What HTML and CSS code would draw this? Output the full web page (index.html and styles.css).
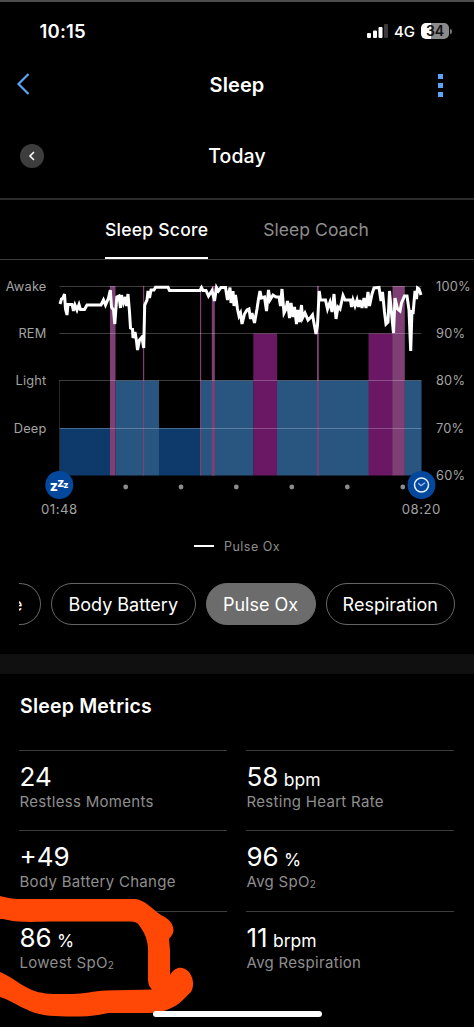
FILE: index.html
```
<!DOCTYPE html>
<html lang="en">
<head>
  <meta charset="UTF-8" />
  <meta name="viewport" content="width=device-width, initial-scale=1.0" />
  <title>Sleep</title>
  <link rel="stylesheet" href="styles.css">
</head>
<body>

<div class="status-bar">
  <span class="time">10:15</span>
  <div class="status-right">
    <svg class="signal" width="22" height="16" viewBox="0 0 22 16">
      <rect x="0" y="10" width="4" height="5" rx="1" fill="#fff"/>
      <rect x="6" y="7.5" width="4" height="7.5" rx="1" fill="#fff"/>
      <rect x="11.5" y="4" width="4" height="11" rx="1" fill="#fff"/>
      <rect x="17" y="1" width="4" height="14" rx="1" fill="#3a3a3a"/>
    </svg>
    <span class="network">4G</span>
    <div class="battery"><span>34</span></div>
    <div class="battery-tip"></div>
  </div>
</div>

<header class="nav">
  <svg width="14" height="24" viewBox="0 0 14 24">
    <path d="M12.500 2 L2.500 12 L12.500 22" fill="none" stroke="#5aa5f5" stroke-width="2.2"/>
  </svg>
  <h1>Sleep</h1>
  <div class="menu"><i></i><i></i><i></i></div>
</header>

<div class="day">
  <button class="prev">
    <svg width="24" height="24" viewBox="0 0 24 24">
      <path d="M14 8 L10 12 L14 16" fill="none" stroke="#fff" stroke-width="1.6"/>
    </svg>
  </button>
  <h2>Today</h2>
</div>

<nav class="tabs">
  <a class="tab active">Sleep Score</a>
  <a class="tab">Sleep Coach</a>
</nav>

<svg class="chart" width="474" height="270" viewBox="0 260 474 270">
  <!-- sleep stages -->
  <g fill="#0d3a6a">
    <rect x="60" y="428" width="50" height="47.5"/>
    <rect x="159" y="428" width="41.5" height="47.5"/>
  </g>
  <g fill="#295681">
    <rect x="115.5" y="380.5" width="43.5" height="95"/>
    <rect x="200.5" y="380.5" width="53" height="95"/>
    <rect x="277" y="380.5" width="92" height="95"/>
    <rect x="404.5" y="380.5" width="17" height="95"/>
  </g>
  <g fill="#6a1864">
    <rect x="253.3" y="333.5" width="23.8" height="142"/>
    <rect x="368.5" y="333.5" width="24.5" height="142"/>
  </g>
  <g fill="#7e3f74">
    <rect x="110" y="286" width="5.5" height="189.5"/>
    <rect x="143" y="286" width="1.2" height="189.5"/>
    <rect x="200" y="286" width="1.2" height="189.5"/>
    <rect x="211.8" y="286" width="3" height="189.5"/>
    <rect x="317" y="286" width="1.8" height="189.5"/>
    <rect x="392.5" y="286" width="12.3" height="189.5"/>
  </g>
  <!-- grid -->
  <g stroke="#fff" stroke-opacity=".24" stroke-width="1">
    <path d="M59.5 286.5H421.5M59.5 333.5H421.5M59.5 380.5H421.5M59.5 428.5H421.5"/>
    <path d="M59.5 380V475" stroke-opacity=".16"/>
  </g>
  <!-- pulse ox -->
  <path class="pulse" d="M60 304 L61.5 299 L63 298 L64.5 294 L65.5 309 L67 315 L68 304.5 L72 304.5 L73.5 311 L75 305 L77 310 L79 304.5 L80.5 309.5 L84.5 309.5 L87 305 L101 305 L103.5 300 L105.5 305 L108.5 298 L110.3 290 L111.5 307 L113.5 310 L114.8 324 L116.8 297 L119 296 L120.5 308 L121.5 295 L123.5 303 L125.5 297 L126.5 306 L128 294 L129.5 312 L130.5 328 L132.5 329 L133 338 L135 332 L136.5 341 L137.5 350 L139.5 340 L142 337 L143.7 348 L144.7 305 L147 300 L148 291 L149.5 298 L151 290 L154 290 L155.5 287.3 L168 287.3 L169.5 290.5 L200 290.5 L201.5 287.5 L203 290.5 L206 290.5 L208.5 296 L212 290.5 L214.5 301 L216.5 287.5 L218.5 291 L221 287.5 L225.5 287.5 L227.5 300 L230 287.5 L231 303 L233 291 L234 306 L235.5 295 L237.5 309 L239 316 L240.5 313 L242 324 L244.5 314 L247 310 L249 309 L250.5 319 L252 313 L254.5 323 L257 309 L258.5 299 L260 291 L261.5 298 L264.5 297 L266.5 311 L268.5 290 L270 300 L273 295 L276 297 L279 297 L280.5 306 L282 289 L284 313 L286 309 L287.5 301 L289.5 318 L291 303 L293 317 L294.5 307 L296.5 324 L298 310 L299.5 322 L301.5 305 L302.5 318 L305 313 L308 320 L311 317 L312.5 315 L314.5 326 L316 334 L317.5 325 L319.2 291 L320.5 300 L325.5 300 L327.5 309 L330 302 L332 312 L334 294 L336 319 L338 307 L340 309 L343 295.5 L345 300 L350.5 300 L351.5 307 L353 300 L355 306 L357 300 L358.5 307 L360 300 L362 308 L364 298 L366 308 L368 292 L369.5 306 L372 294 L374 288 L379 287.5 L381 301 L382.5 292 L384.5 312 L386 324 L388 322 L389.5 291 L391 308 L393.5 333 L395 298 L397.5 309 L400 311 L401.5 303 L404.5 296 L407 296 L409 310 L410.7 351 L412 310 L413 314 L415 291 L416.5 299 L417.5 288 L419 289 L421 295"/>
  <!-- axis labels -->
  <g class="axis" text-anchor="end">
    <text x="46.5" y="290.5">Awake</text>
    <text x="46.5" y="337.5">REM</text>
    <text x="46.5" y="385">Light</text>
    <text x="46.5" y="432.5">Deep</text>
  </g>
  <g class="axis">
    <text x="436" y="290.5">100%</text>
    <text x="436" y="337.5">90%</text>
    <text x="436" y="385">80%</text>
    <text x="436" y="432.5">70%</text>
    <text x="436" y="480">60%</text>
  </g>
  <!-- hour ticks -->
  <g fill="#8c8c8c">
    <circle cx="125.7" cy="487" r="2.4"/>
    <circle cx="181" cy="487" r="2.4"/>
    <circle cx="236.3" cy="487" r="2.4"/>
    <circle cx="291.8" cy="487" r="2.4"/>
    <circle cx="347.3" cy="487" r="2.4"/>
    <circle cx="402.8" cy="487" r="2.4"/>
  </g>
  <circle cx="59.3" cy="485" r="14" fill="#04489e"/>
  <g class="zzz">
    <text x="49.8" y="490.8" font-size="14">z</text>
    <text x="57.3" y="487.3" font-size="12">z</text>
    <text x="63.3" y="488.3" font-size="9">z</text>
  </g>
  <circle cx="421.5" cy="485" r="14" fill="#04489e"/>
  <circle cx="421.5" cy="485" r="7" fill="none" stroke="#e8f2ff" stroke-width="1.5"/>
  <path d="M418.3 483.3 L421 485.7 L425 482.7" fill="none" stroke="#9cc8ff" stroke-width="1.3"/>
  <g class="axis hours" text-anchor="middle">
    <text x="59.3" y="514.2">01:48</text>
    <text x="421.3" y="514.2">08:20</text>
  </g>
</svg>

<div class="legend"><i></i><span>Pulse Ox</span></div>

<div class="chips">
  <button class="chip cut">e</button>
  <button class="chip battery-chip">Body Battery</button>
  <button class="chip pulse-chip selected">Pulse Ox</button>
  <button class="chip resp-chip">Respiration</button>
</div>

<section class="metrics">
  <h3>Sleep Metrics</h3>
  <div class="metrics-grid">
    <div class="metric">
      <div class="value">24</div>
      <div class="label">Restless Moments</div>
    </div>
    <div class="metric">
      <div class="value">58 <small>bpm</small></div>
      <div class="label">Resting Heart Rate</div>
    </div>
    <div class="metric">
      <div class="value">+49</div>
      <div class="label">Body Battery Change</div>
    </div>
    <div class="metric">
      <div class="value">96 <small class="pct">%</small></div>
      <div class="label">Avg SpO<span class="sub">2</span></div>
    </div>
    <div class="metric">
      <div class="value">86 <small class="pct">%</small></div>
      <div class="label">Lowest SpO<span class="sub">2</span></div>
    </div>
    <div class="metric">
      <div class="value">11 <small>brpm</small></div>
      <div class="label">Avg Respiration</div>
    </div>
  </div>
</section>

<!-- hand-drawn marker -->
<svg class="marker" width="200" height="130" viewBox="0 890 200 130">
  <path d="M0 896 C8 898 12 899 20 899 L136 899 C146 901 152 909 161 915 C169 919 173 923 173.500 930 C173.500 934 171 936 169 939 L170 950 L170 975 C175 966 183 966 188 971 C193 976 195 985 191 992 C184 998 180 1005 169 1009 C161 1013 152 1013 142 1013 L108 1013 C98 1015 90 1016.500 80 1016.500 C62 1016.500 43 1017 30 1011 C18 1006 10 1000 0 997 L0 972 C12 977 20 985 32 990 C44 995 58 994 72 994 C84 994 94 991 106 990.500 L152 989.500 C149 986 148 984 148 978 L148 948 C147 936 143 931 139 925 C137 922 134 921.500 130 921.500 L54 921.500 C42 921.500 32 922.500 18 921.500 C10 921 6 919 0 919 Z" fill="#ff4805"/>
</svg>

<div class="home-indicator"></div>

</body>
</html>
```

FILE: styles.css
```
* { margin: 0; padding: 0; box-sizing: border-box; }

body {
  font-family: Inter, sans-serif;
  background: #000;
  color: #fff;
  width: 474px;
  height: 1027px;
  overflow: hidden;
  border-top: 2px solid #4d4d4d;
  position: relative;
}

svg { display: block; }

button {
  font-family: inherit;
  color: inherit;
  background: none;
  border: none;
}

/* status bar */
.status-bar {
  height: 56px;
  padding: 2px 22px 0 39.5px;
  display: flex;
  justify-content: space-between;
  align-items: center;
}

.time {
  font-size: 18.5px;
  font-weight: 600;
  letter-spacing: 0.2px;
}

.status-right {
  display: flex;
  align-items: center;
}

.network {
  font-size: 15px;
  font-weight: 500;
  margin: 1px 6px 0 5px;
}

.battery {
  width: 28px;
  height: 16px;
  border-radius: 5px;
  background: linear-gradient(90deg, #fff 35%, #8a8a8a 35%);
  color: #111;
  font-size: 14px;
  font-weight: 600;
  line-height: 16px;
  text-align: center;
}

.battery-tip {
  width: 2px;
  height: 5px;
  margin-left: 1px;
  background: #777;
  border-radius: 0 2px 2px 0;
}

/* header */
.nav {
  height: 52px;
  padding: 0 31px 0 16px;
  display: flex;
  justify-content: space-between;
  align-items: center;
}

.nav h1 {
  font-size: 20px;
  font-weight: 600;
  padding: 2px 0 0 6px;
  letter-spacing: 0.1px;
}

.menu {
  display: flex;
  flex-direction: column;
  gap: 4px;
  padding-top: 3px;
}

.menu i {
  width: 5px;
  height: 5px;
  background: #5aa5f5;
}

.day {
  height: 90px;
  padding: 3px 20px 0;
  border-bottom: 2px solid #2c2c2c;
  display: grid;
  grid-template-columns: 24px 1fr 24px;
  align-items: center;
  text-align: center;
}

.prev {
  width: 24px;
  height: 24px;
  border-radius: 50%;
  background: #3d3d3d;
}

.day h2 {
  font-size: 19.5px;
  font-weight: 500;
  letter-spacing: 0.1px;
  padding-top: 1px;
}

.tabs {
  height: 60px;
  border-bottom: 1px solid #3a3a3a;
  display: flex;
  justify-content: center;
  gap: 55px;
}

.tab {
  font-size: 17.5px;
  line-height: 60px;
  letter-spacing: 0.05px;
  color: #8e8e8e;
}

.tab.active {
  color: #fff;
  font-weight: 500;
  letter-spacing: 0.25px;
  border-bottom: 2px solid #fff;
}

/* chart */
.pulse {
  fill: none;
  stroke: #fff;
  stroke-width: 3;
  stroke-linejoin: miter;
}

.axis {
  font-size: 12.8px;
  letter-spacing: 0.2px;
  fill: #a3a3a3;
}

.hours {
  font-size: 13.2px;
  letter-spacing: 0.5px;
}

.zzz {
  fill: #fff;
  font-weight: 800;
}

.legend {
  height: 32px;
  display: flex;
  justify-content: center;
  align-items: center;
  gap: 10px;
  font-size: 12.5px;
  letter-spacing: 0.5px;
  color: #8e8e8e;
}

.legend i {
  width: 20px;
  height: 2px;
  background: #fff;
}

.chips {
  margin: 21px 19px 29px;
  height: 42px;
  display: flex;
  gap: 10px;
  overflow: hidden;
}

.chip {
  flex: none;
  height: 42px;
  border: 1px solid #666;
  border-radius: 21px;
  font-size: 18px;
  text-align: center;
}

.chip.cut {
  width: 22px;
  border-left: none;
  border-radius: 0 21px 21px 0;
  text-align: left;
  text-indent: -7px;
}

.battery-chip { width: 144.5px; }
.pulse-chip { width: 110px; }
.resp-chip { width: 129.5px; }

.chip.selected {
  background: #6c6c6c;
  border-color: #6c6c6c;
}

/* metrics */
.metrics {
  border-top: 20px solid #101010;
  padding: 20px 19px 0;
}

.metrics h3 {
  font-size: 19.5px;
  font-weight: 600;
  line-height: 25px;
  letter-spacing: 0.2px;
  padding-left: 1px;
}

.metrics-grid {
  display: grid;
  grid-template-columns: 208px 208px;
  column-gap: 19px;
  margin-top: 31px;
}

.metric {
  height: 80.4px;
  border-top: 1px solid #3c3c3c;
  padding: 10px 0.5px 0;
}

.value {
  font-size: 26px;
  height: 32px;
  line-height: 32px;
  word-spacing: -2px;
}

.value small { font-size: 17.5px; }
.value small.pct { font-size: 17.5px; }

.label {
  font-size: 15px;
  line-height: 18px;
  height: 18px;
  letter-spacing: 0.3px;
  color: #8e8e8e;
}

.sub {
  font-size: 10px;
  position: relative;
  top: 1px;
}

.marker {
  position: absolute;
  left: 0;
  top: 888px;
}

.home-indicator {
  position: absolute;
  left: 153px;
  top: 1009px;
  width: 169px;
  height: 6px;
  border-radius: 3px;
  background: #fff;
}
```
